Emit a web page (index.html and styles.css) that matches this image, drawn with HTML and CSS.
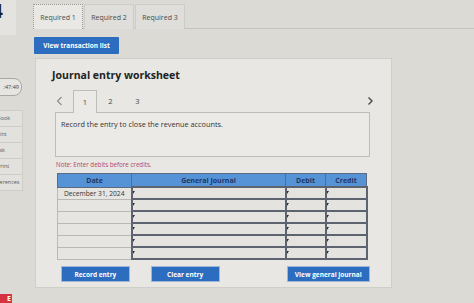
FILE: index.html
```html
<!DOCTYPE html>
<html lang="en">
<head>
    <meta charset="UTF-8">
    <meta name="viewport" content="width=device-width, initial-scale=1.0">
    <title>Journal entry worksheet</title>
    <link rel="stylesheet" href="styles.css">
</head>
<body>
    <div class="page">
        <aside class="sidebar">
            <div class="qnum"><span>4</span></div>
            <div class="timer">:47:49</div>
            <ul class="tools">
                <li><span class="cut-eb">eBook</span></li>
                <li><span class="cut-h">Hint</span></li>
                <li><span class="cut-a">Ask</span></li>
                <li><span class="cut-p">Print</span></li>
                <li><span class="cut-r">References</span></li>
            </ul>
            <div class="exit">E</div>
        </aside>

        <main class="main">
            <div class="tabs">
                <div class="tab active">Required 1</div>
                <div class="tab">Required 2</div>
                <div class="tab">Required 3</div>
            </div>

            <button class="btn btn-list">View transaction list</button>

            <section class="panel">
                <h1>Journal entry worksheet</h1>

                <div class="pager">
                    <span class="chev prev">
                        <svg width="7" height="10" viewBox="0 0 7 10"><path d="M5.5 1 L1.5 5 L5.5 9" fill="none" stroke="#8a8a88" stroke-width="1.1"/></svg>
                    </span>
                    <span class="page-tab current">1</span>
                    <span class="page-tab">2</span>
                    <span class="page-tab">3</span>
                    <span class="chev next">
                        <svg width="7" height="10" viewBox="0 0 7 10"><path d="M1.5 1.5 L5 5 L1.5 8.5" fill="none" stroke="#4a4a4a" stroke-width="1.4"/></svg>
                    </span>
                </div>

                <div class="prompt">Record the entry to close the revenue accounts.</div>

                <p class="note">Note: Enter debits before credits.</p>

                <table class="journal">
                    <thead>
                        <tr>
                            <th class="c-date">Date</th>
                            <th class="c-gj">General Journal</th>
                            <th class="c-dr">Debit</th>
                            <th class="c-cr">Credit</th>
                        </tr>
                    </thead>
                    <tbody>
                        <tr>
                            <td class="date">December 31, 2024</td>
                            <td class="input"><span class="mark"></span></td>
                            <td class="input"><span class="mark"></span></td>
                            <td class="input"><span class="mark"></span></td>
                        </tr>
                        <tr>
                            <td class="date"></td>
                            <td class="input"><span class="mark"></span></td>
                            <td class="input"><span class="mark"></span></td>
                            <td class="input"><span class="mark"></span></td>
                        </tr>
                        <tr>
                            <td class="date"></td>
                            <td class="input"><span class="mark"></span></td>
                            <td class="input"><span class="mark"></span></td>
                            <td class="input"><span class="mark"></span></td>
                        </tr>
                        <tr>
                            <td class="date"></td>
                            <td class="input"><span class="mark"></span></td>
                            <td class="input"><span class="mark"></span></td>
                            <td class="input"><span class="mark"></span></td>
                        </tr>
                        <tr>
                            <td class="date"></td>
                            <td class="input"><span class="mark"></span></td>
                            <td class="input"><span class="mark"></span></td>
                            <td class="input"><span class="mark"></span></td>
                        </tr>
                        <tr>
                            <td class="date"></td>
                            <td class="input"><span class="mark"></span></td>
                            <td class="input"><span class="mark"></span></td>
                            <td class="input"><span class="mark"></span></td>
                        </tr>
                    </tbody>
                </table>

                <div class="actions">
                    <button class="btn btn-record">Record entry</button>
                    <button class="btn btn-clear">Clear entry</button>
                    <button class="btn btn-view">View general journal</button>
                </div>
            </section>
        </main>
    </div>
</body>
</html>
```

FILE: styles.css
```css
html, body {
    margin: 0;
    padding: 0;
    width: 474px;
    height: 303px;
    overflow: hidden;
    font-family: 'Open Sans', 'DejaVu Sans', sans-serif;
    background-color: #dcdad5;
    color: #333;
}
.page {
    display: flex;
    height: 303px;
}

/* left tool column */
.sidebar {
    width: 33px;
    flex: none;
    display: flex;
    flex-direction: column;
    overflow: hidden;
}
.qnum {
    width: 16px;
    height: 35px;
    background-color: #e4e3df;
    overflow: hidden;
}
.qnum span {
    display: block;
    margin: 1px 0 0 -8px;
    font-size: 19px;
    font-weight: bold;
    color: #1b1b1b;
    line-height: 20px;
}
.timer {
    margin: 43px 0 0 -10px;
    width: 28px;
    height: 16px;
    border: 1px solid #a9a8a4;
    border-radius: 8px;
    background-color: #e6e5e1;
    font-size: 5.5px;
    line-height: 16px;
    text-align: right;
    padding-right: 2px;
    box-sizing: content-box;
    color: #444;
}
.tools {
    list-style: none;
    margin: 14px 0 0 0;
    padding: 0;
    width: 23px;
}
.tools li {
    height: 15px;
    border: 1px solid #cfcdc8;
    border-left: none;
    margin-bottom: -1px;
    background-color: #e2e1dd;
    font-size: 5.5px;
    line-height: 15px;
    color: #5c5c5c;
    white-space: nowrap;
    overflow: hidden;
}
.tools li span {
    display: block;
}
.cut-eb { margin-left: -6px; }
.cut-h { margin-left: -4px; }
.cut-a { margin-left: -4px; }
.cut-p { margin-left: -3px; }
.cut-r { margin-left: -9px; }
.exit {
    margin-top: auto;
    width: 12px;
    height: 9px;
    background-color: #d6323f;
    color: #fff;
    font-size: 7px;
    font-weight: bold;
    line-height: 10px;
    text-align: right;
    padding-right: 1px;
    box-sizing: border-box;
}

/* main column */
.main {
    flex: 1;
    display: flex;
    flex-direction: column;
    align-items: flex-start;
}
.tabs {
    align-self: stretch;
    display: flex;
    gap: 1px;
    margin-top: 4px;
    border-bottom: 1px solid #c4c3bf;
    height: 24px;
}
.tab {
    width: 50px;
    height: 25px;
    border: 1px solid #cdccc8;
    border-bottom: none;
    background-color: #dfdeda;
    font-size: 7px;
    line-height: 25px;
    text-align: center;
    color: #4a4a4a;
    box-sizing: border-box;
}
.tab.active {
    background-color: #e9e8e4;
    border: 1px dotted #9a9995;
    border-bottom: none;
}

.btn {
    border: none;
    color: #fff;
    font-family: inherit;
    font-weight: bold;
    font-size: 6.5px;
    background-color: #2c6dbf;
    padding: 0;
    cursor: pointer;
}
.btn-list {
    margin: 8px 0 0 1px;
    width: 85px;
    height: 17px;
    border-radius: 1px;
}

.panel {
    margin: 4px 0 0 2px;
    width: 357px;
    height: 230px;
    box-sizing: border-box;
    border: 1px solid #cfcec9;
    background-color: #e8e7e3;
    padding: 9px 21px 0 19px;
}
.panel h1 {
    margin: 0 0 0 -3px;
    font-size: 10.5px;
    line-height: 14px;
    color: #222;
}
.pager {
    display: flex;
    align-items: center;
    height: 22px;
    margin-top: 8px;
    font-size: 7.5px;
    color: #444;
}
.chev {
    display: flex;
    align-items: center;
}
.chev.prev {
    width: 18px;
    padding-left: 1px;
    box-sizing: border-box;
}
.chev.next {
    margin-left: auto;
    margin-right: -4px;
}
.page-tab {
    width: 27px;
    text-align: center;
    line-height: 22px;
}
.page-tab.current {
    width: 24px;
    height: 23px;
    margin-bottom: -1px;
    box-sizing: border-box;
    border: 1px solid #bdbcb8;
    border-bottom: none;
    background-color: #ebeae6;
    align-self: flex-start;
    position: relative;
    z-index: 1;
}
.prompt {
    height: 45px;
    box-sizing: border-box;
    border: 1px solid #bdbcb8;
    background-color: #ebeae6;
    padding: 6px 0 0 5px;
    font-size: 7.3px;
    color: #333;
}
.note {
    margin: 3px 0 0 1px;
    font-size: 6.2px;
    color: #b4465d;
}

.journal {
    margin: 4px 0 0 2px;
    width: 305px;
    border-collapse: collapse;
    table-layout: fixed;
}
.journal th {
    height: 12px;
    padding: 0;
    background-color: #5693d6;
    color: #1e3766;
    font-size: 7px;
    font-weight: bold;
    border: 1px solid #5d6b82;
}
.c-date { width: 73px; }
.c-gj { width: 153px; }
.c-dr { width: 39px; }
.c-cr { width: 40px; }
.journal td {
    height: 10px;
    padding: 0;
}
.journal td.date {
    border: 1px solid #b9b8b5;
    background-color: #e6e5e1;
    font-size: 6.7px;
    text-align: center;
    color: #333;
}
.journal td.input {
    border: 2px solid #5e6370;
    background-color: #e4e3df;
    vertical-align: top;
    line-height: 0;
}
.mark {
    display: inline-block;
    width: 0;
    height: 0;
    border-top: 3px solid #2a2d36;
    border-right: 2px solid transparent;
}

.actions {
    display: flex;
    margin: 6px 0 0 6px;
}
.actions .btn {
    height: 16px;
    width: 70px;
    border: 1px solid #9fb8d8;
}
.btn-clear {
    margin-left: 21px;
}
.actions .btn-view {
    width: 85px;
    margin-left: 67px;
}
```
